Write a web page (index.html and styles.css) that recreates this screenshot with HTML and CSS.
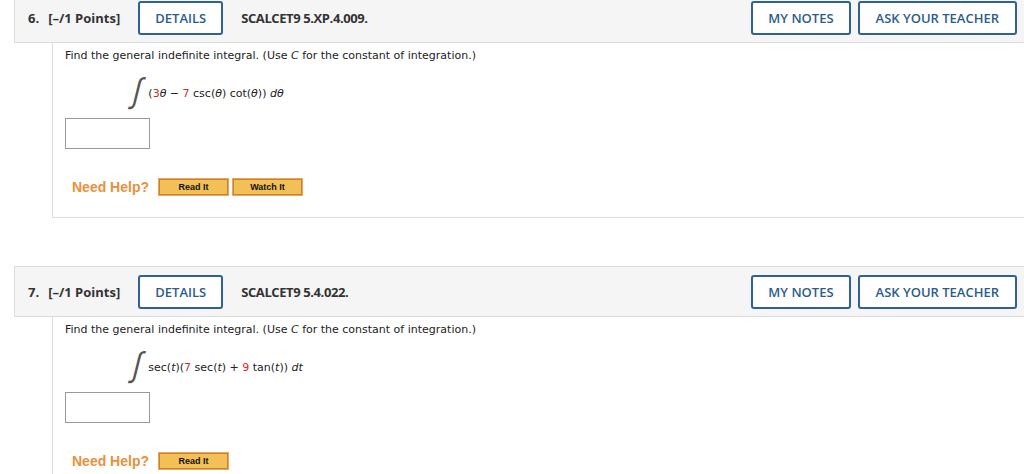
FILE: index.html
```html
<!DOCTYPE html>
<html>
<head>
<meta charset="utf-8">
<link rel="stylesheet" href="styles.css">
</head>
<body>
<div class="page">
  <section class="question">
    <div class="qhead">
      <span class="qnum"><span class="qn">6.</span>[–/1 Points]</span>
      <button class="obtn">DETAILS</button>
      <span class="qref">SCALCET9 5.XP.4.009.</span>
      <span class="spacer"></span>
      <button class="obtn">MY NOTES</button>
      <button class="obtn">ASK YOUR TEACHER</button>
    </div>
    <div class="qbody">
      <p class="prompt">Find the general indefinite integral. (Use <i>C</i> for the constant of integration.)</p>
      <div class="integral">
        <span class="intsign">∫</span>
        <span class="expr">(<span class="red">3</span><i>θ</i> − <span class="red">7</span> csc(<i>θ</i>) cot(<i>θ</i>)) <i>dθ</i></span>
      </div>
      <div class="answer"></div>
      <div class="help">
        <span class="needhelp">Need Help?</span>
        <button class="hbtn">Read It</button>
        <button class="hbtn">Watch It</button>
      </div>
    </div>
  </section>

  <section class="question">
    <div class="qhead">
      <span class="qnum"><span class="qn">7.</span>[–/1 Points]</span>
      <button class="obtn">DETAILS</button>
      <span class="qref">SCALCET9 5.4.022.</span>
      <span class="spacer"></span>
      <button class="obtn">MY NOTES</button>
      <button class="obtn">ASK YOUR TEACHER</button>
    </div>
    <div class="qbody">
      <p class="prompt">Find the general indefinite integral. (Use <i>C</i> for the constant of integration.)</p>
      <div class="integral">
        <span class="intsign">∫</span>
        <span class="expr">sec(<i>t</i>)(<span class="red">7</span> sec(<i>t</i>) + <span class="red">9</span> tan(<i>t</i>)) <i>dt</i></span>
      </div>
      <div class="answer"></div>
      <div class="help">
        <span class="needhelp">Need Help?</span>
        <button class="hbtn">Read It</button>
      </div>
    </div>
  </section>
</div>
</body>
</html>
```

FILE: styles.css
```css
html, body {
  margin: 0;
  padding: 0;
  background: #ffffff;
  overflow: hidden;
}
.page {
  margin-top: -8px;
  width: 1040px;
}
.question {
  margin-left: 14px;
  width: 1012px;
  margin-bottom: 48px;
}
.qhead {
  display: flex;
  align-items: center;
  background: #f5f5f5;
  border: 1px solid #dcdcdc;
  padding: 8px 8px 7px 13px;
  font-family: "Open Sans", "DejaVu Sans", sans-serif;
  font-size: 13px;
  font-weight: 700;
  color: #333333;
}
.qnum {
  margin-right: 18px;
  white-space: nowrap;
}
.qn {
  margin-right: 9px;
}
.qref {
  margin-left: 18px;
  letter-spacing: -0.4px;
}
.spacer {
  flex: 1;
}
.obtn {
  height: 34px;
  box-sizing: border-box;
  border: 2px solid #2f6196;
  border-radius: 3px;
  background: #ffffff;
  color: #2c5c8e;
  font-family: "Open Sans", "DejaVu Sans", sans-serif;
  font-size: 13px;
  font-weight: 600;
  padding: 0 15px;
  margin: 0;
}
.obtn:last-child {
  padding: 0 16px;
}
.obtn + .obtn {
  margin-left: 7px;
}
.qbody {
  margin-left: 38px;
  border-left: 1px solid #dcdcdc;
  border-bottom: 1px solid #dcdcdc;
  padding: 5px 0 21px 12px;
  font-family: "DejaVu Sans", Verdana, sans-serif;
  font-size: 11px;
  color: #222222;
}
.prompt {
  margin: 0;
  line-height: 16px;
}
.integral {
  display: flex;
  align-items: center;
  margin: 12px 0 0 68px;
  height: 34px;
}
.intsign {
  font-family: "DejaVu Sans", sans-serif;
  font-weight: 200;
  font-size: 34px;
  line-height: 34px;
  color: #555555;
  margin: 0 6px 6px 0;
  transform: skewX(-14deg) scaleX(0.8);
}
.expr {
  font-size: 11px;
}
.red {
  color: #d22a1f;
}
.answer {
  margin-top: 8px;
  width: 83px;
  height: 29px;
  border: 1px solid #999999;
}
.help {
  display: flex;
  align-items: center;
  margin-top: 29px;
  padding-left: 7px;
  height: 18px;
}
.needhelp {
  font-family: "Liberation Sans", Arial, sans-serif;
  font-weight: 700;
  font-size: 14px;
  color: #e8913b;
  margin-right: 9px;
}
.hbtn {
  width: 71px;
  height: 18px;
  box-sizing: border-box;
  margin: 0 3px 0 0;
  padding: 0;
  border: 1px solid #e6a85e;
  box-shadow: inset 0 0 0 1px #c8812f;
  background: #f2c057;
  font-family: "Liberation Sans", Arial, sans-serif;
  font-weight: 700;
  font-size: 9px;
  color: #111111;
}
```
